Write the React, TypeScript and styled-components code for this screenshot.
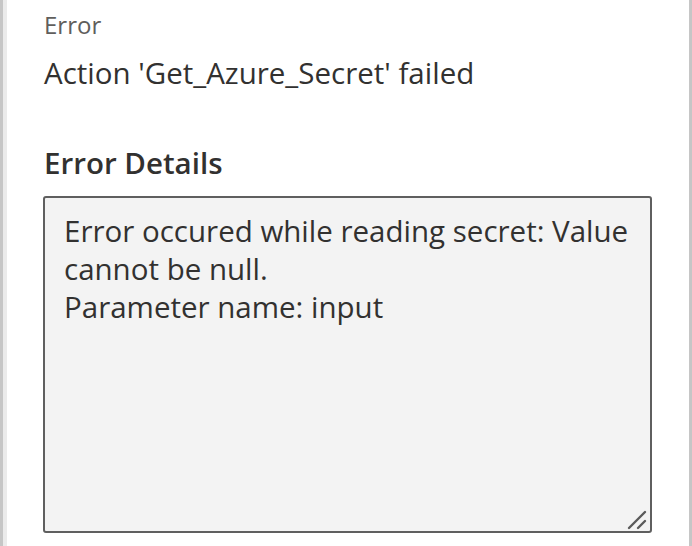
import React from 'react';
import styled, { createGlobalStyle } from 'styled-components';

const GlobalStyle = createGlobalStyle`
  html, body {
    margin: 0;
    padding: 0;
    background: #ffffff;
  }
  body {
    font-family: 'Open Sans', 'Noto Sans', sans-serif;
    color: #323130;
  }
`;

export default function App() {
  return (
    <>
      <GlobalStyle />
      <Frame>
        <Panel>
          <Label>Error</Label>
          <Message>Action 'Get_Azure_Secret' failed</Message>

          <SectionTitle>Error Details</SectionTitle>
          <DetailsBox>
            <Details
              readOnly
              defaultValue={
                'Error occured while reading secret: Value cannot be null.\nParameter name: input'
              }
            />
            <Grip width="22" height="22" viewBox="0 0 22 22">
              <path d="M3 20 L19 4 M12 20 L19 13" />
            </Grip>
          </DetailsBox>
        </Panel>
      </Frame>
    </>
  );
}

const Frame = styled.div`
  display: flex;
  height: 546px;
  box-sizing: border-box;
  border-left: 3px solid #c6c6c6;
  border-right: 3px solid #c6c6c6;
  overflow: hidden;
`;

const Panel = styled.section`
  flex: 1;
  display: flex;
  flex-direction: column;
  align-items: flex-start;
  border-left: 4px solid #ebebeb;
  padding: 9px 0 0 37px;
`;

const Label = styled.div`
  font-size: 24px;
  line-height: 32px;
  color: #605e5c;
`;

const Message = styled.div`
  margin-top: 12px;
  font-size: 29.5px;
  line-height: 40px;
  color: #323130;
`;

const SectionTitle = styled.h2`
  margin: 50px 0 0;
  font-size: 29.5px;
  line-height: 40px;
  font-weight: 600;
  color: #323130;
`;

const DetailsBox = styled.div`
  position: relative;
  margin: 13px 0 0 -1px;
  display: flex;
`;

const Details = styled.textarea`
  box-sizing: border-box;
  width: 609px;
  height: 337px;
  padding: 14px 8px 0 19px;
  border: 2px solid #5f5f5f;
  border-radius: 3px;
  background: #f3f3f3;
  font-family: 'Open Sans', 'Noto Sans', sans-serif;
  font-size: 29.5px;
  line-height: 38px;
  color: #323130;
  resize: none;
  outline: none;
  overflow: hidden;
`;

const Grip = styled.svg`
  position: absolute;
  right: 4px;
  bottom: 3px;
  fill: none;
  stroke: #5a5a5a;
  stroke-width: 2.4;
  stroke-linecap: round;
  pointer-events: none;
`;
